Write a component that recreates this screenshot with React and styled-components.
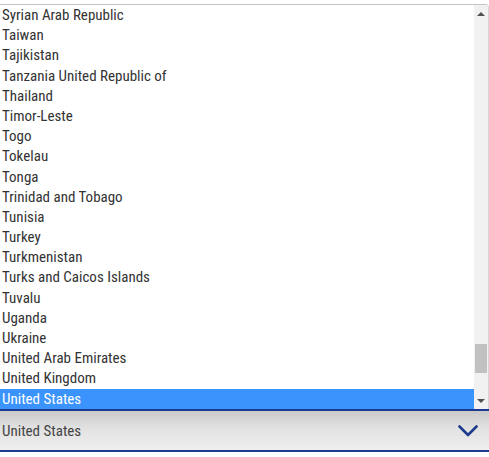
import React from "react";
import styled, { createGlobalStyle } from "styled-components";

const GlobalStyle = createGlobalStyle`
  html, body {
    margin: 0;
    padding: 0;
    background: #fff;
  }
  body {
    font-family: "Liberation Sans Narrow", "Roboto Condensed", Roboto, "Liberation Sans", sans-serif;
  }
`;

const Page = styled.div`
  width: 489px;
  padding-top: 4px;
  box-sizing: border-box;
`;

const Popup = styled.div`
  display: flex;
  height: 405px;
  border-top: 1px solid #c4c4c4;
  border-right: 1px solid #d6d6d6;
  border-top-right-radius: 4px;
  box-sizing: border-box;
  background: #fff;
  overflow: hidden;
`;

const List = styled.ul`
  flex: 1;
  list-style: none;
  margin: 0;
  padding: 0;
`;

const Option = styled.li`
  height: 20.2px;
  line-height: 20.2px;
  padding-left: 2px;
  font-size: 15px;
  color: ${(p) => (p.$selected ? "#fff" : "#333")};
  background: ${(p) => (p.$selected ? "#3b94fd" : "transparent")};
  white-space: nowrap;
`;

const Scrollbar = styled.div`
  width: 14px;
  display: flex;
  flex-direction: column;
  background: #f1f1f1;
`;

const Arrow = styled.div`
  height: 17px;
  display: flex;
  align-items: center;
  justify-content: center;
  &::after {
    content: "";
    border-left: 4px solid transparent;
    border-right: 4px solid transparent;
    ${(p) =>
      p.$down
        ? "border-top: 4px solid #505050;"
        : "border-bottom: 4px solid #505050;"}
  }
`;

const Track = styled.div`
  flex: 1;
  display: flex;
  flex-direction: column;
  justify-content: flex-end;
  padding: 0 1px 19px;
`;

const Thumb = styled.div`
  height: 29px;
  background: #c1c1c1;
`;

const SelectBox = styled.div`
  height: 43px;
  display: flex;
  align-items: center;
  justify-content: space-between;
  padding: 0 11px 0 2px;
  box-sizing: border-box;
  border-top: 2px solid #1d3a92;
  border-bottom: 2px solid #1d3a92;
  background: linear-gradient(to bottom, #cacaca 0%, #e2e2e2 45%, #efefef 100%);
  font-size: 15px;
  color: #444;
`;

const Chevron = () => (
  <svg width="20" height="12" viewBox="0 0 20 12" fill="none">
    <polyline
      points="1.5,1.5 10,10 18.5,1.5"
      stroke="#1e3a8c"
      strokeWidth="2.6"
      strokeLinecap="round"
      strokeLinejoin="round"
    />
  </svg>
);

const countries = [
  "Syrian Arab Republic",
  "Taiwan",
  "Tajikistan",
  "Tanzania United Republic of",
  "Thailand",
  "Timor-Leste",
  "Togo",
  "Tokelau",
  "Tonga",
  "Trinidad and Tobago",
  "Tunisia",
  "Turkey",
  "Turkmenistan",
  "Turks and Caicos Islands",
  "Tuvalu",
  "Uganda",
  "Ukraine",
  "United Arab Emirates",
  "United Kingdom",
  "United States",
];

const selected = "United States";

export default function App() {
  return (
    <Page>
      <GlobalStyle />
      <Popup>
        <List>
          {countries.map((c) => (
            <Option key={c} $selected={c === selected}>
              {c}
            </Option>
          ))}
        </List>
        <Scrollbar>
          <Arrow />
          <Track>
            <Thumb />
          </Track>
          <Arrow $down />
        </Scrollbar>
      </Popup>
      <SelectBox>
        <span>{selected}</span>
        <Chevron />
      </SelectBox>
    </Page>
  );
}
